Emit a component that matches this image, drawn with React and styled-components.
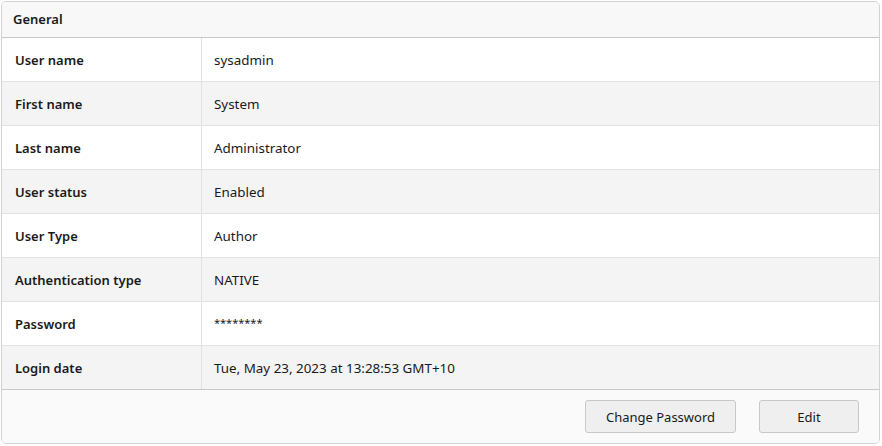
import React from "react";
import styled, { createGlobalStyle } from "styled-components";

const Global = createGlobalStyle`
  html, body {
    margin: 0;
    padding: 0;
    background: #ffffff;
  }
  body {
    font-family: "Noto Sans", "Open Sans", sans-serif;
    color: #1a1a1a;
  }
`;

const Page = styled.div`
  padding: 1px 2px 2px 1px;
`;

const Card = styled.div`
  width: 877px;
  border: 1px solid #d2d2d2;
  border-radius: 5px;
  overflow: hidden;
  background: #fff;
`;

const Header = styled.div`
  height: 35px;
  display: flex;
  align-items: center;
  padding: 0 11px 1px;
  box-sizing: border-box;
  height: 36px;
  background: #f8f8f8;
  border-bottom: 1px solid #c8c8c8;
  font-size: 13px;
  font-weight: 600;
`;

const Row = styled.div`
  display: grid;
  grid-template-columns: 200px 1fr;
  height: 43px;
  background: ${p => (p.$alt ? "#f4f4f4" : "#ffffff")};
  border-bottom: 1px solid ${p => (p.$last ? "#c8c8c8" : "#e2e2e2")};
`;

const Label = styled.div`
  display: flex;
  align-items: center;
  padding-left: 13px;
  border-right: 1px solid #e2e2e2;
  font-size: 13px;
  font-weight: 600;
`;

const Value = styled.div`
  display: flex;
  align-items: center;
  padding-left: 12px;
  font-size: ${p => (p.$masked ? "11px" : "13.4px")};
  padding-bottom: ${p => (p.$masked ? "3px" : "0")};
`;

const Footer = styled.div`
  height: 53px;
  display: flex;
  justify-content: flex-end;
  align-items: center;
  gap: 23px;
  padding-right: 20px;
  background: #fafafa;
`;

const Button = styled.button`
  height: 33px;
  width: ${p => p.$w}px;
  border: 1px solid #c8c8c8;
  border-radius: 3px;
  background: #efefef;
  font-family: inherit;
  font-size: 13px;
  color: #1a1a1a;
  cursor: pointer;
`;

const rows = [
  ["User name", "sysadmin"],
  ["First name", "System"],
  ["Last name", "Administrator"],
  ["User status", "Enabled"],
  ["User Type", "Author"],
  ["Authentication type", "NATIVE"],
  ["Password", "********"],
  ["Login date", "Tue, May 23, 2023 at 13:28:53 GMT+10"],
];

export default function App() {
  return (
    <Page>
      <Global />
      <Card>
        <Header>General</Header>
        {rows.map(([label, value], i) => (
          <Row key={label} $alt={i % 2 === 1} $last={i === rows.length - 1}>
            <Label>{label}</Label>
            <Value $masked={label === "Password"}>{value}</Value>
          </Row>
        ))}
        <Footer>
          <Button $w={151}>Change Password</Button>
          <Button $w={100}>Edit</Button>
        </Footer>
      </Card>
    </Page>
  );
}
